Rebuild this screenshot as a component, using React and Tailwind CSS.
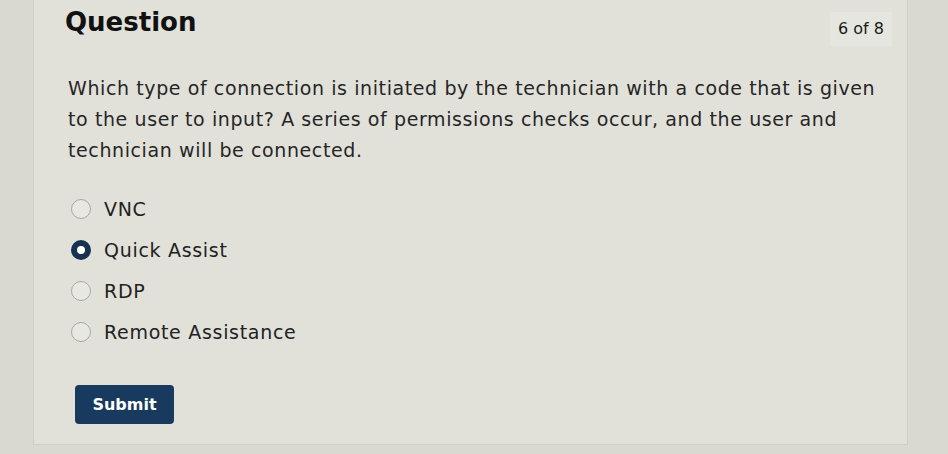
export default function App() {
  const options = ["VNC", "Quick Assist", "RDP", "Remote Assistance"];
  const selected = "Quick Assist";

  return (
    <div
      className="w-full h-[454px] bg-[#d9d9d2] overflow-hidden"
      style={{ fontFamily: "'DejaVu Sans', 'Noto Sans', sans-serif" }}
    >
      <div className="ml-[33px] w-[875px] h-[445px] bg-[#e1e1da] border-l border-r border-b border-[#d0d0c9] pl-[31px] pr-[15px]">
        {/* Header */}
        <div className="flex items-start justify-between pt-[4px]">
          <h1 className="text-[26px] font-bold text-[#111] leading-[36px]">
            Question
          </h1>
          <span className="mt-[8px] px-[8px] py-[6px] bg-[#e6e6e0] text-[16px] text-[#1a1a1a] leading-[22px]">
            6 of 8
          </span>
        </div>

        {/* Question text */}
        <p className="mt-[27px] pl-[3px] text-[19px] leading-[31px] text-[#262626] w-[828px] tracking-[0.6px]">
          Which type of connection is initiated by the technician with a code
          that is given to the user to input? A series of permissions checks
          occur, and the user and technician will be connected.
        </p>

        {/* Options */}
        <div className="mt-[32px] pl-[6px] flex flex-col gap-[19px]">
          {options.map((o) => (
            <label key={o} className="flex items-center gap-[13px] h-[22px]">
              {o === selected ? (
                <span className="w-[20px] h-[20px] rounded-full bg-[#16324f] flex items-center justify-center">
                  <span className="w-[8px] h-[8px] rounded-full bg-white" />
                </span>
              ) : (
                <span className="w-[20px] h-[20px] rounded-full border border-[#a9a9a3] bg-[#e8e8e2]" />
              )}
              <span className="text-[19px] text-[#222] tracking-[0.7px]">{o}</span>
            </label>
          ))}
        </div>

        {/* Submit */}
        <button className="mt-[42px] ml-[10px] w-[99px] h-[39px] rounded-[4px] bg-[#173a5e] text-white text-[16px] font-bold">
          Submit
        </button>
      </div>
    </div>
  );
}
